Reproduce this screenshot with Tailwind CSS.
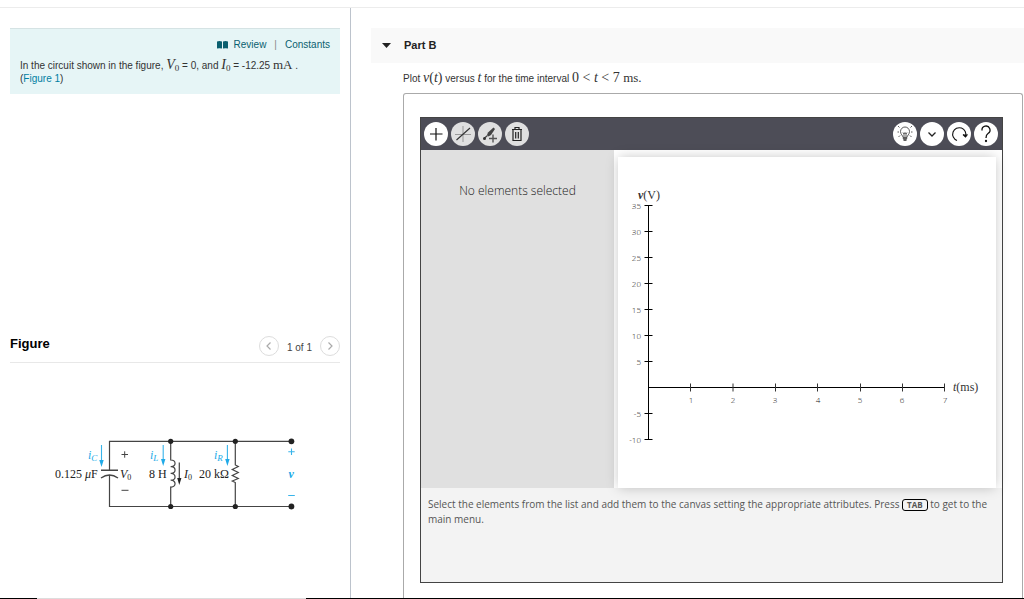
<!DOCTYPE html>
<html lang="en">
<head>
<meta charset="utf-8">
<meta name="viewport" content="width=device-width, initial-scale=1">
<title>Part B</title>
<script src="https://cdn.jsdelivr.net/npm/@tailwindcss/browser@4"></script>
</head>
<body class="flex min-h-screen flex-col bg-white font-['Liberation_Sans',sans-serif] text-[10px] text-[#333]">
<div class="mt-[7px] flex flex-1 border-t border-[#ececec]">
  <aside class="w-[351px] shrink-0 border-r border-[#bcc3cc] px-[10px] pt-5">
    <section class="h-[66px] border-t border-[#d5e3e4] bg-[#e6f5f6] px-[10px] pt-[9px]">
      <nav class="flex items-center justify-end gap-2 leading-[14px] text-[#0a5f6f]">
        <a href="#" class="flex items-center gap-[6px]">
          <svg class="h-2 w-[11px]" viewBox="0 0 11 8" aria-hidden="true"><path d="M0 .4Q2.8-.4 5 .6V7.6Q2.8 6.8 0 7.4ZM6 .6Q8.200-.4 11 .4V7.400Q8.200 6.800 6 7.600Z" fill="#0a5f6f"/></svg>
          Review
        </a>
        <span class="text-[#888]">|</span>
        <a href="#">Constants</a>
      </nav>
      <p class="mt-[6px] whitespace-nowrap leading-[13px]">In the circuit shown in the figure, <span class="font-['Liberation_Serif',serif] text-[14px] leading-none"><i>V</i><sub class="text-[9px] leading-none">0</sub></span> = 0, and <span class="font-['Liberation_Serif',serif] text-[14px] leading-none"><i>I</i><sub class="text-[9px] leading-none">0</sub></span> = -12.25 <span class="font-['Liberation_Serif',serif] text-[13px] leading-none">mA</span> .<br>(<a href="#figure" class="text-[#007fa3]">Figure 1</a>)</p>
    </section>
    <section id="figure" class="mt-[236px]">
      <header class="flex h-[33px] items-start justify-between border-b border-[#e8e8e8]">
        <h2 class="pt-[6px] text-[13px] leading-4 font-bold text-black">Figure</h2>
        <div class="flex items-center gap-2 pt-[6px]">
          <button type="button" aria-label="Previous figure" class="flex size-5 items-center justify-center rounded-full border border-[#ddd]"><svg class="h-2 w-[5px]" viewBox="0 0 5 8" fill="none" stroke="#aaa" stroke-width="1.2"><path d="M4.500.5 1 4l3.500 3.500"/></svg></button>
          <span class="pt-[2px] text-[#444]">1 of 1</span>
          <button type="button" aria-label="Next figure" class="flex size-5 items-center justify-center rounded-full border border-[#ddd]"><svg class="h-2 w-[5px]" viewBox="0 0 5 8" fill="none" stroke="#aaa" stroke-width="1.2"><path d="M.5.5 4 4 .5 7.500"/></svg></button>
        </div>
      </header>
      <svg class="mt-[72px] ml-10 h-[80px] w-[250px]" viewBox="50 435 250 80" role="img" aria-label="Parallel RLC circuit" font-family="Liberation Serif, serif" font-size="12" fill="#222">
        <g fill="none" stroke="#444" stroke-width="1.200">
          <path d="M109.500 470V441.400H291.300M109.500 475V506.500H291.300"/>
          <path d="M101 470.300H118M101 478Q109.500 472 118 478" stroke-width="1.400"/>
          <path d="M170.700 441V460C176.500 460 176.500 467 170.700 466.600C176.500 466 176.500 474 170.700 473.400C176.500 473 176.500 481 170.700 480.200C176.500 480 176.500 487.500 170.700 487V506.500"/>
          <path d="M235.300 441V465L238.300 466.500 232.300 469.500 238.300 472.500 232.300 475.500 238.300 478.500 232.300 481 235.300 482.500V506.500"/>
          <path d="M179.300 462.500V479"/>
          <path d="M121.500 454.500H128M124.700 451.300V457.700M121.500 490.300H128.500" stroke-width="1"/>
        </g>
        <g fill="#222">
          <circle cx="170.700" cy="441.300" r="2.600"/><circle cx="235.300" cy="441.300" r="2.600"/><circle cx="291.400" cy="441.300" r="2.900"/>
          <circle cx="170.700" cy="506.500" r="2.600"/><circle cx="235.300" cy="506.500" r="2.600"/><circle cx="291.400" cy="506.500" r="2.900"/>
          <path d="M177.200 478H181.400L179.300 485Z"/>
        </g>
        <g fill="none" stroke="#38b4ea" stroke-width="1.100"><path d="M101.500 445V461M163.200 445V460M227.400 445V460M288.300 451.700H294.700M291.500 448.500V454.900M288.200 495.500H294.800"/></g>
        <g fill="#20aae8"><path d="M99.300 460H103.700L101.500 467ZM161 459H165.400L163.200 466ZM225.200 459H229.600L227.400 466Z"/>
          <text x="88" y="459" font-style="italic">i<tspan font-size="9" dy="2">C</tspan></text>
          <text x="150" y="459" font-style="italic">i<tspan font-size="9" dy="2">L</tspan></text>
          <text x="214" y="459" font-style="italic">i<tspan font-size="9" dy="2">R</tspan></text>
          <text x="288.500" y="478" font-style="italic" font-size="12" font-weight="bold">v</text>
        </g>
        <text x="55" y="478">0.125 <tspan font-style="italic">μ</tspan>F</text>
        <text x="120" y="478" font-style="italic">V<tspan font-size="8" dy="1.500" font-style="normal">0</tspan></text>
        <text x="149" y="478">8 H</text>
        <text x="184" y="478" font-style="italic">I<tspan font-size="8" dy="1.500" font-style="normal">0</tspan></text>
        <text x="199" y="478">20 kΩ</text>
      </svg>
    </section>
  </aside>

  <main class="flex min-w-0 flex-1 flex-col pt-5">
    <header class="ml-5 flex h-[35px] items-center gap-[13px] bg-[#f9f9f9] pl-[11px]">
      <button type="button" aria-label="Collapse Part B"><svg class="h-[5px] w-[9px]" viewBox="0 0 9 5"><path d="M0 0H9L4.500 5Z" fill="#222"/></svg></button>
      <h1 class="text-[11px] font-bold text-[#222]">Part B</h1>
    </header>
    <p class="mt-2 ml-[52px] h-[14px] leading-[14px] whitespace-nowrap">Plot <span class="font-['Liberation_Serif',serif] text-[14px] leading-none"><i>v</i>(<i>t</i>)</span> versus <i class="font-['Liberation_Serif',serif] text-[14px] leading-none">t</i> for the time interval <span class="font-['Liberation_Serif',serif] text-[14px] leading-none">0 &lt; <i>t</i> &lt; 7 <span class="text-[13px]">ms.</span></span></p>
    <div class="mt-2 mr-px ml-[52px] flex-1 rounded-t-[3px] border border-b-0 border-[#aaa] pt-[23px] pr-[19px] pb-[15px] pl-4">
      <section class="border border-[#444] bg-[#f3f3f3] font-['Open_Sans',sans-serif]">
        <div role="toolbar" class="flex h-8 items-center justify-between bg-[#4d4d57] pr-1 pl-[3px]">
          <div class="flex gap-[3px]">
            <button type="button" aria-label="Add element" class="size-6 rounded-full bg-white"><svg viewBox="0 0 24 24" fill="none" stroke="#111" stroke-width="1.200"><path d="M6 12H18.500M12 6V18.500"/></svg></button>
            <button type="button" aria-label="No line" class="size-6 rounded-full bg-[#e0e0e0]"><svg viewBox="0 0 24 24" fill="none"><path d="M4 12.500H20M12 4V20" stroke="#999"/><path d="M5.500 18 19 6" stroke="#333" stroke-width="1.200"/></svg></button>
            <button type="button" aria-label="Add point" class="size-6 rounded-full bg-[#e0e0e0]"><svg viewBox="0 0 24 24" fill="none"><path d="M15.500 5.500 17 7 13 13 10.500 14.500 9 13 10 10.500Z" fill="#444"/><path d="M9.500 13.500 6 16.500" stroke="#444" stroke-width="1.200"/><circle cx="6.500" cy="16.500" r="1.500" fill="#333"/><path d="M11 16.500H19M15 12.500V20.500" stroke="#555" stroke-width="1.400"/></svg></button>
            <button type="button" aria-label="Delete" class="size-6 rounded-full bg-[#e0e0e0]"><svg viewBox="0 0 24 24" fill="none" stroke="#222" stroke-width="1.200"><path d="M7 7.500H17M10 7V5.500H14V7M8 8V18.500H16V8M10.700 10V16.500M13.300 10V16.500"/></svg></button>
          </div>
          <div class="flex gap-[3px]">
            <button type="button" aria-label="Hint" class="size-6 rounded-full bg-white"><svg viewBox="0 0 24 24" fill="none" stroke="#333" stroke-width=".8"><path d="M10 15.500C10 13.500 7.500 12.500 7.500 9.500A4.500 4.500 0 0 1 16.500 9.500C16.500 12.500 14 13.500 14 15.500ZM10 10.500 11 12 12 10.500 13 12 14 10.500M11 12V15M13 12V15M10.500 18.500H13.500M6.500 5.500 5 4M17.500 5.500 19 4M6 10H4.500M18 10H19.500M7 13.500 5.500 15M17 13.500 18.500 15"/><path d="M9.800 16.500H14.200M10.300 17.500H13.700"/></svg></button>
            <button type="button" aria-label="More options" class="size-6 rounded-full bg-white"><svg viewBox="0 0 24 24" fill="none" stroke="#222" stroke-width="1.300"><path d="M8.500 10.500 12 14 15.500 10.500"/></svg></button>
            <button type="button" aria-label="Reset" class="size-6 rounded-full bg-white"><svg viewBox="0 0 24 24" fill="none" stroke="#111" stroke-width="1.100"><path d="M10 18.500A6.600 6.600 0 1 1 18.500 14.500"/><path d="M16 12.500 18.500 15 20.500 12.500" fill="#111"/></svg></button>
            <button type="button" aria-label="Help" class="size-6 rounded-full bg-white"><svg viewBox="0 0 24 24" fill="none" stroke="#111" stroke-width="1.300"><path d="M8 8.500A4 4 0 1 1 14 11.500C12.500 12.500 12 13.500 12 16"/><circle cx="12" cy="19" r=".5" fill="#111"/></svg></button>
          </div>
        </div>
        <div class="flex h-[338px]">
          <div class="w-[193px] shrink-0 bg-[#e0e0e0] pt-[33px] text-center text-xs leading-4 font-light text-[#222]">No elements selected</div>
          <div class="flex-1 bg-white pt-[7px] pr-[6px] pl-1">
            <div class="h-full bg-white shadow-[0_0_12px_-1px_rgba(0,0,0,0.250)]">
              <svg class="h-[331px] w-[378px]" viewBox="618 157 378 331" role="img" aria-label="Graph of v(V) versus t(ms)" font-family="Open Sans, sans-serif" font-size="8" font-weight="300" fill="#111">
                <g fill="none" stroke="#000" stroke-width="1">
                  <path d="M648.500 205.500V439.500M648.500 387.500H944.500"/>
                  <path d="M644.500 205.500H652.500M644.500 231.500H652.500M644.500 257.500H652.500M644.500 283.500H652.500M644.500 309.500H652.500M644.500 335.500H652.500M644.500 361.500H652.500M644.500 413.500H652.500M644.500 439.500H652.500"/>
                  <path d="M690.500 383.500V391.500M733 383.500V391.500M775.500 383.500V391.500M817.500 383.500V391.500M860.500 383.500V391.500M902.500 383.500V391.500M944.500 383.500V391.500" stroke="#333" stroke-width="1"/>
                </g>
                <g text-anchor="end"><text x="641" y="209">35</text><text x="641" y="235">30</text><text x="641" y="261">25</text><text x="641" y="287">20</text><text x="641" y="313">15</text><text x="641" y="339">10</text><text x="641" y="365">5</text><text x="641" y="417">-5</text><text x="641" y="443">-10</text></g>
                <g text-anchor="middle"><text x="691" y="403">1</text><text x="733" y="403">2</text><text x="775" y="403">3</text><text x="818" y="403">4</text><text x="860" y="403">5</text><text x="902" y="403">6</text><text x="945" y="403">7</text></g>
                <g font-family="Liberation Serif, serif" font-size="12" font-weight="400" fill="#333"><text x="638" y="199"><tspan font-style="italic" font-weight="700">v</tspan>(V)</text><text x="953" y="391"><tspan font-style="italic">t</tspan>(ms)</text></g>
              </svg>
            </div>
          </div>
        </div>
        <p class="h-[94px] px-[7px] pt-[9px] text-[10px] leading-[15px] text-[#555]">Select the elements from the list and add them to the canvas setting the appropriate attributes. Press <kbd class="inline-block rounded-[3px] border border-black px-1 font-['Open_Sans',sans-serif] text-[8px] leading-[10px] font-bold">TAB</kbd> to get to the main menu.</p>
      </section>
    </div>
  </main>
</div>
<div class="flex h-px"><span class="w-[37px] bg-black"></span><span class="w-[269px] bg-[#ddd]"></span><span class="flex-1 bg-black"></span></div>
</body>
</html>
